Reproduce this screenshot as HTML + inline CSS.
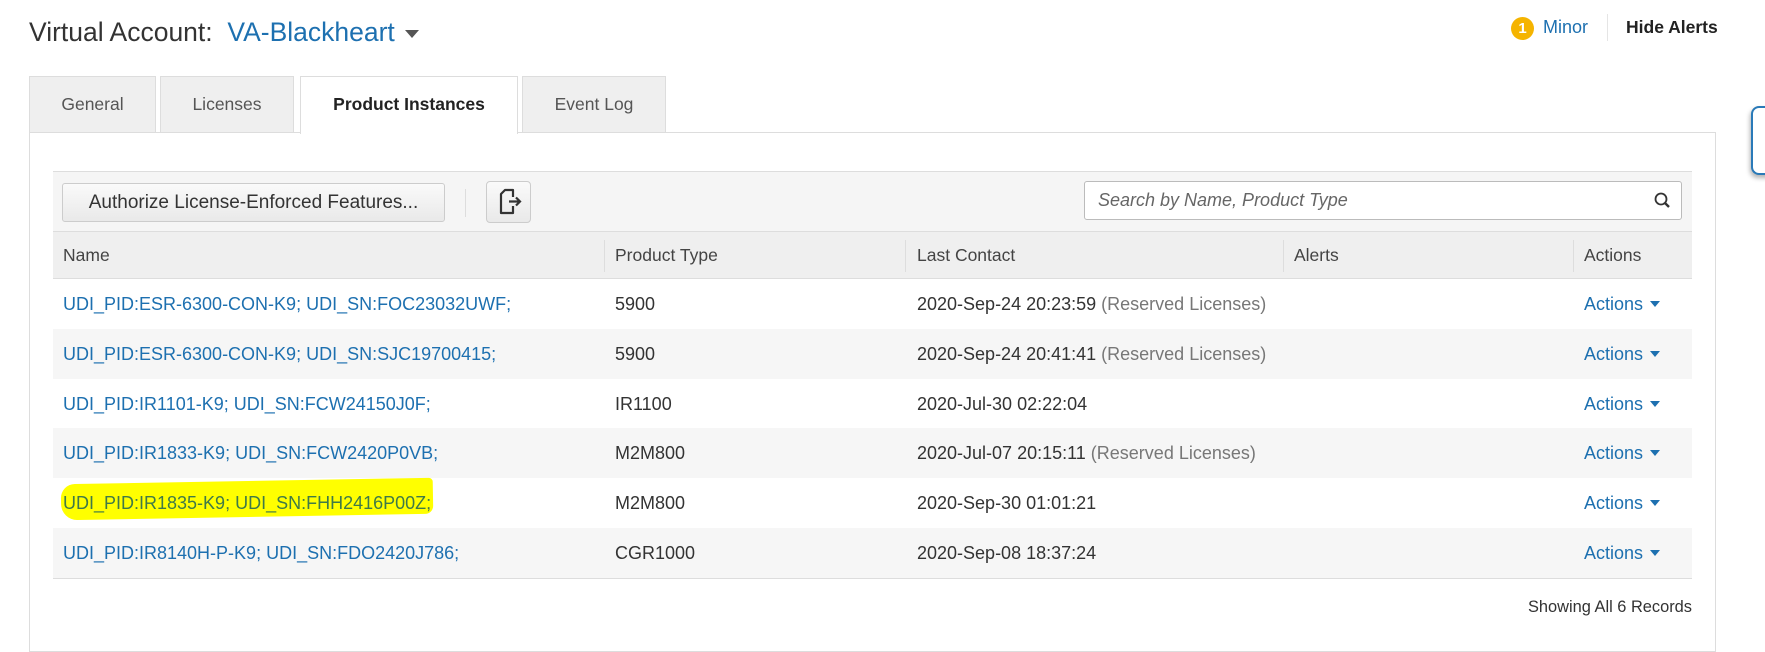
<!DOCTYPE html>
<html><head><meta charset="utf-8"><style>
*{box-sizing:border-box;margin:0;padding:0}
body{width:1765px;height:632px;overflow:hidden;background:#fff;font-family:"Liberation Sans",Arial,sans-serif;color:#333;position:relative}
.a{position:absolute}
.tab{position:absolute;top:76px;height:56px;background:#efefef;border:1px solid #ddd;border-bottom:none;font-size:17.5px;color:#555;text-align:center;line-height:54px}
.row{position:absolute;left:53px;width:1639px;height:50px;font-size:18px;line-height:50px}
.row span{position:absolute}
.lnk{color:#1d70b0}
.g{color:#777}
.act{left:1531px;color:#1d70b0}
.act:after{content:"";display:inline-block;margin-left:7px;border-left:5px solid transparent;border-right:5px solid transparent;border-top:6px solid #1d70b0;vertical-align:3px}
.hd{position:absolute;top:232px;height:47px;line-height:47px;font-size:17.5px;color:#444}
.sep{position:absolute;top:240px;width:1px;height:32px;background:#ddd}
</style></head><body>
<div class="a" style="left:29px;top:17px;font-size:26.5px;color:#333">Virtual Account:&nbsp; <span style="color:#1d70b0">VA-Blackheart</span></div>
<div class="a" style="left:405px;top:30px;border-left:7px solid transparent;border-right:7px solid transparent;border-top:8px solid #555"></div>
<div class="a" style="left:1511px;top:17px;width:23px;height:23px;border-radius:50%;background:#f5b400;color:#fff;font-size:15px;font-weight:bold;text-align:center;line-height:23px">1</div>
<div class="a" style="left:1543px;top:17px;font-size:18px;color:#1d70b0">Minor</div>
<div class="a" style="left:1607px;top:14px;width:1px;height:27px;background:#e5e5e5"></div>
<div class="a" style="left:1626px;top:17px;font-size:17.5px;font-weight:bold;color:#222">Hide Alerts</div>

<div class="a" style="left:29px;top:132px;width:1687px;height:520px;border:1px solid #ddd"></div>
<div class="tab" style="left:29px;width:127px">General</div>
<div class="tab" style="left:160px;width:134px">Licenses</div>
<div class="tab" style="left:300px;width:218px;height:58px;background:#fff;color:#222;font-weight:bold">Product Instances</div>
<div class="tab" style="left:522px;width:144px">Event Log</div>

<div class="a" style="left:53px;top:171px;width:1639px;height:61px;background:#f5f5f5;border-top:1px solid #ddd;border-bottom:1px solid #ddd"></div>
<div class="a" style="left:62px;top:183px;width:383px;height:39px;border:1px solid #ccc;border-radius:3px;background:linear-gradient(#fafafa,#e9e9e9);font-size:19px;color:#333;text-align:center;line-height:37px;white-space:nowrap">Authorize License-Enforced Features...</div>
<div class="a" style="left:465px;top:189px;width:1px;height:28px;background:#ddd"></div>
<div class="a" style="left:486px;top:181px;width:45px;height:42px;border:1px solid #ccc;border-radius:4px;background:linear-gradient(#fafafa,#e9e9e9)">
<svg width="43" height="40" viewBox="0 0 43 40"><path d="M26 15 V8 H18 L14 12 V31 H26 V24" fill="none" stroke="#333" stroke-width="2.2" stroke-linejoin="round"/><path d="M22 19.5 H33 M29 15.5 L33 19.5 L29 23.5" fill="none" stroke="#333" stroke-width="2.2"/></svg></div>
<div class="a" style="left:1084px;top:181px;width:598px;height:39px;border:1px solid #bbb;border-radius:3px;background:#fff;font-size:18px;font-style:italic;color:#666;line-height:37px;padding-left:13px">Search by Name, Product Type
<svg class="a" style="right:8px;top:9px" width="20" height="20" viewBox="0 0 20 20"><circle cx="8" cy="8" r="5.5" fill="none" stroke="#333" stroke-width="1.8"/><path d="M12 12 L16 16" stroke="#333" stroke-width="2.4"/></svg></div>

<div class="a" style="left:53px;top:232px;width:1639px;height:47px;background:#efefef;border-bottom:1px solid #ddd"></div>
<div class="hd" style="left:63px">Name</div>
<div class="sep" style="left:604px"></div><div class="hd" style="left:615px">Product Type</div>
<div class="sep" style="left:905px"></div><div class="hd" style="left:917px">Last Contact</div>
<div class="sep" style="left:1283px"></div><div class="hd" style="left:1294px">Alerts</div>
<div class="sep" style="left:1573px"></div><div class="hd" style="left:1584px">Actions</div>

<div class="row" style="top:279px"><span class="lnk" style="left:10px">UDI_PID:ESR-6300-CON-K9; UDI_SN:FOC23032UWF;</span><span style="left:562px">5900</span><span style="left:864px">2020-Sep-24 20:23:59 <span class="g" style="position:static">(Reserved Licenses)</span></span><span class="act">Actions</span></div>
<div class="row" style="top:329px;background:#f6f6f6"><span class="lnk" style="left:10px">UDI_PID:ESR-6300-CON-K9; UDI_SN:SJC19700415;</span><span style="left:562px">5900</span><span style="left:864px">2020-Sep-24 20:41:41 <span class="g" style="position:static">(Reserved Licenses)</span></span><span class="act">Actions</span></div>
<div class="row" style="top:379px"><span class="lnk" style="left:10px">UDI_PID:IR1101-K9; UDI_SN:FCW24150J0F;</span><span style="left:562px">IR1100</span><span style="left:864px">2020-Jul-30 02:22:04</span><span class="act">Actions</span></div>
<div class="row" style="top:428px;background:#f6f6f6"><span class="lnk" style="left:10px">UDI_PID:IR1833-K9; UDI_SN:FCW2420P0VB;</span><span style="left:562px">M2M800</span><span style="left:864px">2020-Jul-07 20:15:11 <span class="g" style="position:static">(Reserved Licenses)</span></span><span class="act">Actions</span></div>
<div class="a" style="left:61px;top:481px;width:372px;height:36px;background:#ffff00;border-radius:14px 4px 8px 16px;transform:rotate(-1deg)"></div>
<div class="row" style="top:478px"><span class="lnk" style="left:10px;color:#3f7a48">UDI_PID:IR1835-K9; UDI_SN:FHH2416P00Z;</span><span style="left:562px">M2M800</span><span style="left:864px">2020-Sep-30 01:01:21</span><span class="act">Actions</span></div>
<div class="row" style="top:528px;background:#f6f6f6;border-bottom:1px solid #ddd;height:51px"><span class="lnk" style="left:10px">UDI_PID:IR8140H-P-K9; UDI_SN:FDO2420J786;</span><span style="left:562px">CGR1000</span><span style="left:864px">2020-Sep-08 18:37:24</span><span class="act">Actions</span></div>
<div class="a" style="right:73px;top:598px;font-size:16.4px;color:#333">Showing All 6 Records</div>

<div class="a" style="left:1751px;top:106px;width:30px;height:69px;border:2px solid #2a7ab8;border-right:none;border-radius:8px 0 0 8px;background:#fff;box-shadow:-1px 3px 5px rgba(0,0,0,.3)"></div>
</body></html>
